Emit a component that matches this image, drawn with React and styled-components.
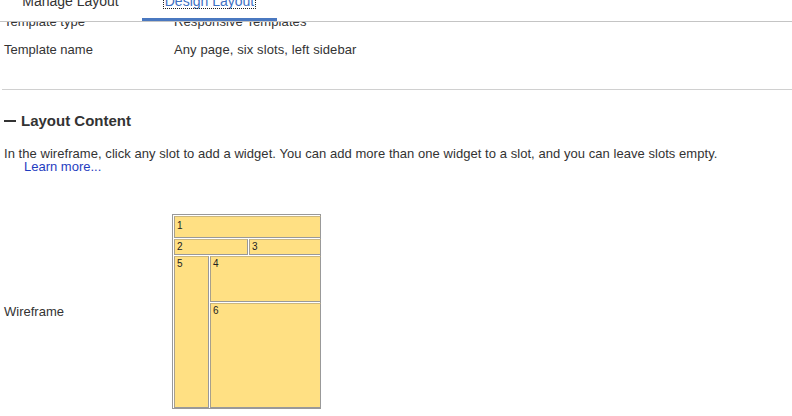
import React from "react";
import styled, { createGlobalStyle } from "styled-components";

const Global = createGlobalStyle`
  html, body { margin: 0; padding: 0; background: #fff; }
  body { font-family: "Liberation Sans", Arial, sans-serif; color: #333; }
  * { box-sizing: border-box; }
`;

const Page = styled.div`
  width: 792px;
  height: 416px;
  overflow: hidden;
  display: flex;
  flex-direction: column;
`;

const TabBar = styled.div`
  height: 22px;
  flex: none;
  display: flex;
  align-items: flex-end;
  gap: 4px;
  padding-left: 3px;
  border-bottom: 1px solid #c4c4c4;
  overflow: hidden;
`;

const Tab = styled.div`
  width: 135px;
  height: 29px;
  flex: none;
  margin-bottom: -1px;
  display: flex;
  justify-content: center;
  align-items: flex-start;
  font-size: 14px;
  line-height: 16px;
  color: ${(p) => (p.$active ? "#3d6fc2" : "#333")};
  border-bottom: 4px solid ${(p) => (p.$active ? "#4a78c0" : "transparent")};
`;

const TabLabel = styled.span`
  padding: 0 2px;
  outline: ${(p) => (p.$focus ? "1px dotted #222" : "none")};
  outline-offset: -1px;
`;

const Content = styled.div`
  flex: 1;
  overflow: hidden;
`;

const InfoRow = styled.div`
  display: grid;
  grid-template-columns: 170px 1fr;
  height: 28px;
  line-height: 28px;
  font-size: 13px;
  padding-left: 4px;
  &:first-child { margin-top: -14px; }
`;

const Value = styled.span`
  letter-spacing: 0.1px;
`;

const Divider = styled.div`
  height: 1px;
  background: #d0d0d0;
  margin: 25px 0 0 2px;
`;

const Heading = styled.h2`
  margin: 22px 0 0;
  padding-left: 4px;
  display: flex;
  align-items: center;
  gap: 5px;
  font-size: 15px;
  line-height: 18px;
  font-weight: bold;
  color: #333;
`;

const Dash = styled.span`
  width: 12px;
  height: 2px;
  background: #333;
  margin-top: -1px;
`;

const Para = styled.p`
  margin: 17px 0 0;
  padding-left: 4px;
  font-size: 13px;
  line-height: 13px;
  letter-spacing: 0.05px;
`;

const LearnMore = styled.a`
  display: block;
  margin-left: 24px;
  font-size: 13px;
  line-height: 13px;
  color: #1f3dbf;
  text-decoration: none;
`;

const WireRow = styled.div`
  display: grid;
  grid-template-columns: 168px auto;
  align-items: center;
  margin-top: 41px;
  padding-left: 4px;
  font-size: 13px;
`;

const Wire = styled.div`
  width: 149px;
  height: 195px;
  border: 1px solid #999;
  padding: 1px 1px 0 1px;
  display: grid;
  grid-template-columns: 35px 38px 72px;
  grid-template-rows: 22px 16px 46px 105px;
  gap: 1px;
`;

const Slot = styled.div`
  background: #ffe083;
  border: 1px solid #999;
  border-top-color: #cbb67c;
  border-left-color: #a8a08c;
  font-size: 10px;
  line-height: 11px;
  color: #222;
  padding: ${(p) => p.$pt || 1}px 0 0 2px;
  grid-column: ${(p) => p.$col};
  grid-row: ${(p) => p.$row};
`;

export default function App() {
  return (
    <>
      <Global />
      <Page>
        <TabBar>
          <Tab><TabLabel>Manage Layout</TabLabel></Tab>
          <Tab $active><TabLabel $focus>Design Layout</TabLabel></Tab>
        </TabBar>
        <Content>
          <InfoRow>
            <span>Template type</span>
            <Value>Responsive Templates</Value>
          </InfoRow>
          <InfoRow>
            <span>Template name</span>
            <Value>Any page, six slots, left sidebar</Value>
          </InfoRow>
          <Divider />
          <Heading>
            <Dash />
            Layout Content
          </Heading>
          <Para>
            In the wireframe, click any slot to add a widget. You can add more than one widget to a slot, and you can leave slots empty.
          </Para>
          <LearnMore href="#">Learn more...</LearnMore>
          <WireRow>
            <span>Wireframe</span>
            <Wire>
              <Slot $col="1 / 4" $row="1" $pt={3}>1</Slot>
              <Slot $col="1 / 3" $row="2">2</Slot>
              <Slot $col="3" $row="2">3</Slot>
              <Slot $col="1" $row="3 / 5">5</Slot>
              <Slot $col="2 / 4" $row="3">4</Slot>
              <Slot $col="2 / 4" $row="4">6</Slot>
            </Wire>
          </WireRow>
        </Content>
      </Page>
    </>
  );
}
